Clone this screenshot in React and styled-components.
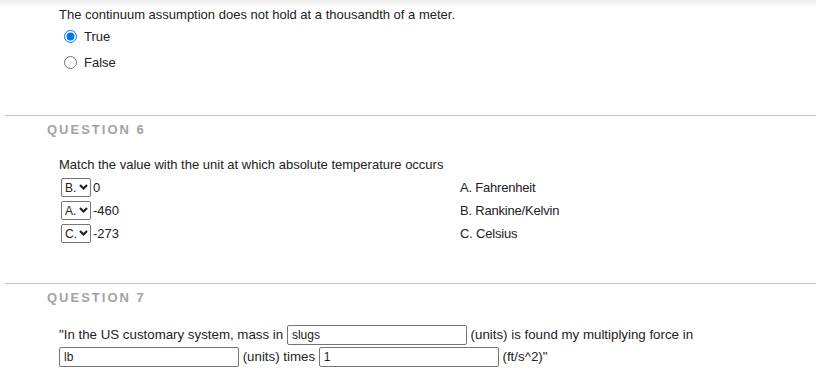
import React from "react";
import styled, { createGlobalStyle } from "styled-components";

const GlobalStyle = createGlobalStyle`
  html, body {
    margin: 0;
    padding: 0;
    background: #fff;
  }
  body {
    font-family: "Liberation Sans", Arial, sans-serif;
    font-size: 13px;
    color: #222;
  }
`;

const Page = styled.div`
  width: 816px;
  overflow: hidden;
`;

const TopFade = styled.div`
  height: 7px;
  background: linear-gradient(#ececec, #fff);
`;

const Question = styled.section`
  margin-left: 5px;
  border-top: ${(props) => (props.first ? "none" : "1px solid #cbcbcb")};
  padding-bottom: ${(props) => props.bottom || 0}px;
`;

const Heading = styled.h3`
  margin: 0;
  padding: 6px 0 0 42px;
  font-size: 13px;
  line-height: 16px;
  font-weight: 700;
  letter-spacing: 2px;
  color: #a3a3a3;
`;

const Body = styled.div`
  padding-left: 54px;
  margin-top: ${(props) => props.top || 0}px;
`;

const Prompt = styled.p`
  margin: 0;
  line-height: 16px;
`;

const Options = styled.div`
  margin-top: 0;
`;

const Option = styled.label`
  display: flex;
  align-items: center;
  height: 26px;

  input {
    margin: 0 7px 0 5px;
    width: 13px;
    height: 13px;
  }
`;

const MatchGrid = styled.div`
  margin-top: 3px;
  display: grid;
  grid-template-columns: 401px auto;
  grid-auto-rows: 23px;
  align-items: center;
`;

const MatchCell = styled.div`
  display: flex;
  align-items: center;
  gap: 2px;
  padding-left: 2px;
`;

const SelectWrap = styled.span`
  position: relative;
  display: inline-block;
  height: 19px;
`;

const Select = styled.select`
  appearance: none;
  -webkit-appearance: none;
  height: 19px;
  width: 30px;
  padding: 0 0 0 3px;
  border: 1px solid #767676;
  border-radius: 2px;
  background: #fff;
  color: #222;
  font-family: "Liberation Sans", Arial, sans-serif;
  font-size: 12px;
`;

const Chevron = styled.svg`
  position: absolute;
  right: 3px;
  top: 6px;
  pointer-events: none;
`;

const Answer = styled.div`
  line-height: 16px;
  letter-spacing: -0.2px;
`;

const Sentence = styled.p`
  margin: 0;
  font-size: 13.3px;
  line-height: 22px;
`;

const Blank = styled.input`
  box-sizing: border-box;
  width: 180px;
  height: 20px;
  margin: 1px 0 0;
  vertical-align: top;
  padding: 0 4px;
  border: 1px solid #767676;
  border-radius: 2px;
  font-family: "Liberation Sans", Arial, sans-serif;
  font-size: 12px;
  color: #222;
`;

const pairs = [
  { pick: "B", value: "0", answer: "A. Fahrenheit" },
  { pick: "A", value: "-460", answer: "B. Rankine/Kelvin" },
  { pick: "C", value: "-273", answer: "C. Celsius" },
];

const Dropdown = ({ value }) => (
  <SelectWrap>
    <Select defaultValue={value}>
      <option value="A">A.</option>
      <option value="B">B.</option>
      <option value="C">C.</option>
    </Select>
    <Chevron width="9" height="6" viewBox="0 0 9 6">
      <path d="M1 1 L4.5 4.5 L8 1" fill="none" stroke="#222" strokeWidth="2.2" />
    </Chevron>
  </SelectWrap>
);

export default function App() {
  return (
    <Page>
      <GlobalStyle />
      <TopFade />
      <Question first bottom={40}>
        <Body>
          <Prompt>The continuum assumption does not hold at a thousandth of a meter.</Prompt>
          <Options>
            <Option>
              <input type="radio" name="q5" defaultChecked />
              True
            </Option>
            <Option>
              <input type="radio" name="q5" />
              False
            </Option>
          </Options>
        </Body>
      </Question>

      <Question bottom={38}>
        <Heading>QUESTION 6</Heading>
        <Body top={19}>
          <Prompt>Match the value with the unit at which absolute temperature occurs</Prompt>
          <MatchGrid>
            {pairs.map((row) => (
              <React.Fragment key={row.answer}>
                <MatchCell>
                  <Dropdown value={row.pick} />
                  {row.value}
                </MatchCell>
                <Answer>{row.answer}</Answer>
              </React.Fragment>
            ))}
          </MatchGrid>
        </Body>
      </Question>

      <Question bottom={10}>
        <Heading>QUESTION 7</Heading>
        <Body top={18}>
          <Sentence>
            "In the US customary system, mass in <Blank defaultValue="slugs" /> (units) is found my
            multiplying force in
            <br />
            <Blank defaultValue="lb" /> (units) times <Blank defaultValue="1" /> (ft/s^2)"
          </Sentence>
        </Body>
      </Question>
    </Page>
  );
}
